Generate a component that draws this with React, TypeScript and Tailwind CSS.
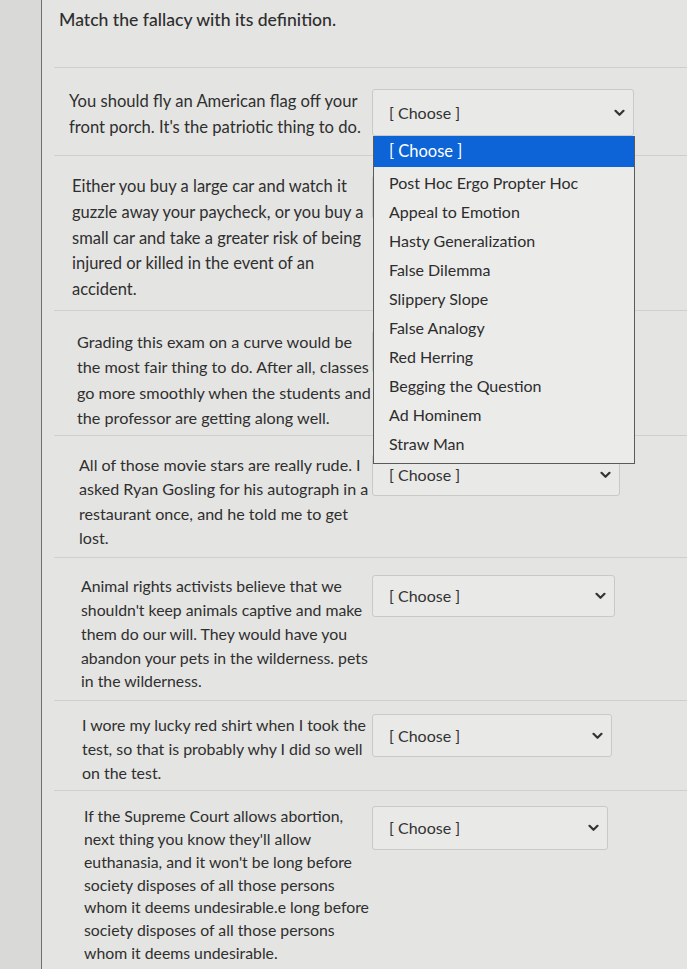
import React from "react";

const OPTIONS = [
  "Post Hoc Ergo Propter Hoc",
  "Appeal to Emotion",
  "Hasty Generalization",
  "False Dilemma",
  "Slippery Slope",
  "False Analogy",
  "Red Herring",
  "Begging the Question",
  "Ad Hominem",
  "Straw Man",
];

type Row = {
  lines: string[];
  pl: number;
  pt: number;
  pb: number;
  lh: number;
  fs: number;
  selW: number;
  selH: number;
  open?: boolean;
};

const ROWS: Row[] = [
  { lines: ["You should fly an American flag off your", "front porch. It's the patriotic thing to do."], pl: 15, pt: 20, pb: 15, lh: 26, fs: 16.6, selW: 262, selH: 47, open: true },
  { lines: ["Either you buy a large car and watch it", "guzzle away your paycheck, or you buy a", "small car and take a greater risk of being", "injured or killed in the event of an", "accident."], pl: 18, pt: 18, pb: 7, lh: 25.8, fs: 16.5, selW: 260, selH: 44 },
  { lines: ["Grading this exam on a curve would be", "the most fair thing to do. After all, classes", "go more smoothly when the students and", "the professor are getting along well."], pl: 23, pt: 18, pb: 5, lh: 25.3, fs: 16.2, selW: 255, selH: 43 },
  { lines: ["All of those movie stars are really rude. I", "asked Ryan Gosling for his autograph in a", "restaurant once, and he told me to get", "lost."], pl: 25, pt: 17, pb: 7, lh: 24.3, fs: 16.1, selW: 248, selH: 42 },
  { lines: ["Animal rights activists believe that we", "shouldn't keep animals captive and make", "them do our will. They would have you", "abandon your pets in the wilderness. pets", "in the wilderness."], pl: 27, pt: 16, pb: 7, lh: 23.75, fs: 15.8, selW: 243, selH: 42 },
  { lines: ["I wore my lucky red shirt when I took the", "test, so that is probably why I did so well", "on the test."], pl: 28, pt: 12, pb: 5, lh: 24, fs: 15.9, selW: 240, selH: 43 },
  { lines: ["If the Supreme Court allows abortion,", "next thing you know they'll allow", "euthanasia, and it won't be long before", "society disposes of all those persons", "whom it deems undesirable.e long before", "society disposes of all those persons", "whom it deems undesirable."], pl: 30, pt: 14, pb: 6, lh: 22.8, fs: 15.8, selW: 236, selH: 44 },
];

function Chevron() {
  return (
    <svg width="11" height="8" viewBox="0 0 11 8" className="shrink-0">
      <path d="M1.5 1.8 L5.5 5.8 L9.5 1.8" fill="none" stroke="#333" strokeWidth="2.2" strokeLinecap="round" strokeLinejoin="round" />
    </svg>
  );
}

function Select({ w, h, open }: { w: number; h: number; open?: boolean }) {
  return (
    <div className="relative mt-[1px] self-start" style={{ width: w }}>
      <div
        className="flex items-center justify-between rounded-[3px] border border-[#c9c9c7] bg-[#e9e9e7] pl-[16px] pr-[8px] text-[16px] text-[#333]"
        style={{ height: h }}
      >
        <span>[ Choose ]</span>
        <Chevron />
      </div>
      {open && (
        <div className="absolute left-[1px] top-full z-10 w-[262px] border-x border-b border-[#5a5a5a] bg-[#ebebea] pb-[5px]">
          <div className="flex h-[31px] items-center bg-[#0d64d6] pl-[15px] text-[16.5px] text-white">[ Choose ]</div>
          <div className="pt-[1px]">
            {OPTIONS.map((o) => (
              <div key={o} className="flex h-[29px] items-center pl-[15px] text-[16px] text-[#2d2d2d]">
                {o}
              </div>
            ))}
          </div>
        </div>
      )}
    </div>
  );
}

export default function App() {
  return (
    <div className="flex min-h-[969px] w-[687px] bg-[#d9d9d7] font-['Lato','Liberation_Sans',sans-serif]">
      <div className="w-[42px] shrink-0 border-r border-[#6f6f6f]" />
      <div className="flex-1 bg-[#e4e4e2]">
        <h1 className="pl-[17px] pt-[7px] text-[17.6px] font-medium leading-[26px] text-[#2e2e2e]">
          Match the fallacy with its definition.
        </h1>
        <div className="mt-[34px] ml-[12px]">
          {ROWS.map((r, i) => (
            <div key={i} className="flex border-t border-[#cfcfcd]" style={{ paddingTop: r.pt, paddingBottom: r.pb }}>
              <div
                className="w-[318px] shrink-0 text-[#2f2f2f]"
                style={{ paddingLeft: r.pl, lineHeight: `${r.lh}px`, fontSize: r.fs }}
              >
                {r.lines.map((l, j) => (
                  <div key={j} className="whitespace-nowrap">
                    {l}
                  </div>
                ))}
              </div>
              <Select w={r.selW} h={r.selH} open={r.open} />
            </div>
          ))}
        </div>
      </div>
    </div>
  );
}
